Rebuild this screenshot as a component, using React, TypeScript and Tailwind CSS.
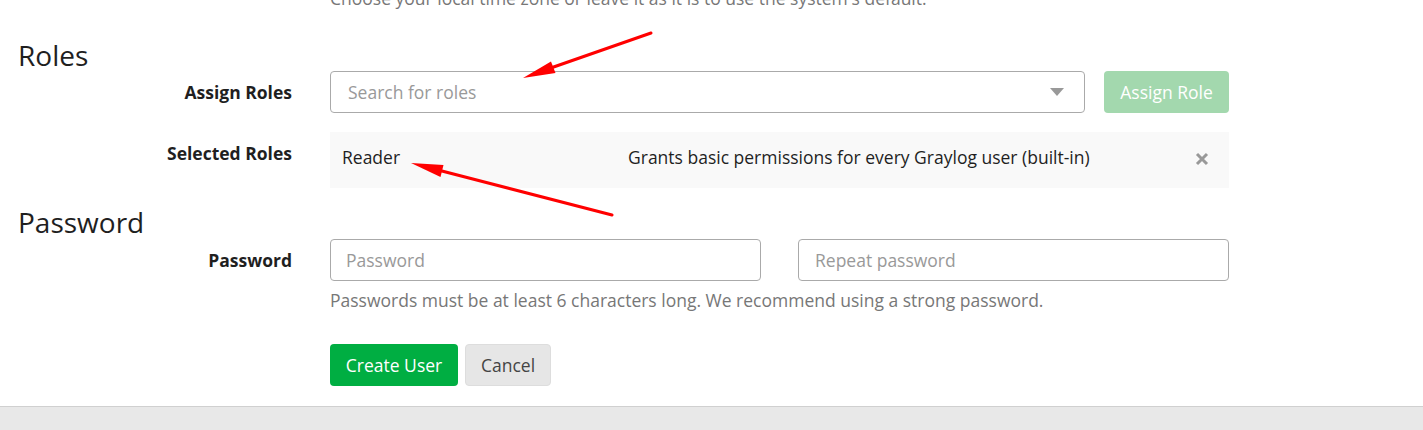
import React from "react";

export default function App() {
  return (
    <div
      className="relative w-[1423px] h-[430px] overflow-hidden bg-white text-[#1f1f1f]"
      style={{ fontFamily: '"Open Sans", "Liberation Sans", sans-serif' }}
    >
      <div className="pl-[330px] mt-[-12px] h-[20px] leading-[20px] text-[17.5px] text-[#777] whitespace-nowrap">
        Choose your local time zone or leave it as it is to use the system's default.
      </div>

      <h2 className="mt-[31px] pl-[18px] text-[28px] leading-[32px] font-normal">Roles</h2>

      <div className="flex items-center h-[42px]">
        <div className="w-[292px] text-right font-bold text-[17.5px]">Assign Roles</div>
        <div className="ml-[38px] flex gap-[19px]">
          <div className="w-[755px] h-[42px] border border-[#aaa] rounded-[4px] flex items-center justify-between pl-[17px] pr-[20px]">
            <span className="text-[17.5px] text-[#999]">Search for roles</span>
            <svg width="14" height="8" viewBox="0 0 14 8">
              <polygon points="0,0 14,0 7,8" fill="#999" />
            </svg>
          </div>
          <button className="w-[125px] h-[42px] rounded-[4px] bg-[#a3d8ae] text-white text-[17.5px]">
            Assign Role
          </button>
        </div>
      </div>

      <div className="flex mt-[19px]">
        <div className="w-[292px] text-right font-bold text-[17.5px] pt-[11px] leading-[20px]">Selected Roles</div>
        <div className="ml-[38px] w-[899px] h-[56px] bg-[#f9f9f9] flex items-start pt-[14px] pl-[12px] pr-[20px] text-[17.5px] leading-[22px]">
          <span className="w-[286px]">Reader</span>
          <span className="flex-1">Grants basic permissions for every Graylog user (built-in)</span>
          <svg width="14" height="14" viewBox="0 0 14 14" className="mt-[6px]">
            <path d="M2 2 L12 12 M12 2 L2 12" stroke="#999" strokeWidth="3" />
          </svg>
        </div>
      </div>

      <h2 className="mt-[18px] pl-[18px] text-[28px] leading-[32px] font-normal">Password</h2>

      <div className="flex items-center h-[42px] mt-[1px]">
        <div className="w-[292px] text-right font-bold text-[17.5px]">Password</div>
        <div className="ml-[38px] flex gap-[37px]">
          <div className="w-[431px] h-[42px] border border-[#aaa] rounded-[4px] flex items-center pl-[15px] text-[17.5px] text-[#999]">
            Password
          </div>
          <div className="w-[431px] h-[42px] border border-[#aaa] rounded-[4px] flex items-center pl-[16px] text-[17.5px] text-[#999]">
            Repeat password
          </div>
        </div>
      </div>

      <div className="mt-[9px] pl-[330px] text-[17.5px] leading-[20px] text-[#777]">
        Passwords must be at least 6 characters long. We recommend using a strong password.
      </div>

      <div className="mt-[34px] pl-[330px] flex gap-[7px]">
        <button className="w-[128px] h-[42px] rounded-[4px] bg-[#00ae42] text-white text-[17.5px]">
          Create User
        </button>
        <button className="w-[86px] h-[42px] rounded-[4px] bg-[#e6e6e6] border border-[#ddd] text-[#444] text-[17.5px]">
          Cancel
        </button>
      </div>

      <div className="mt-[20px] h-[40px] bg-[#e8e8e8] border-t border-[#d0d0d0]" />

      <svg
        className="absolute left-0 top-0 pointer-events-none"
        width="1423"
        height="430"
        viewBox="0 0 1423 430"
      >
        <line x1="651" y1="33" x2="545" y2="70" stroke="#ff0000" strokeWidth="3" strokeLinecap="round" />
        <polygon points="523,78 551,61.5 555.5,73" fill="#ff0000" />
        <line x1="612" y1="215" x2="438" y2="170" stroke="#ff0000" strokeWidth="3" strokeLinecap="round" />
        <polygon points="411,163 443.5,165 440.5,177" fill="#ff0000" />
      </svg>
    </div>
  );
}
